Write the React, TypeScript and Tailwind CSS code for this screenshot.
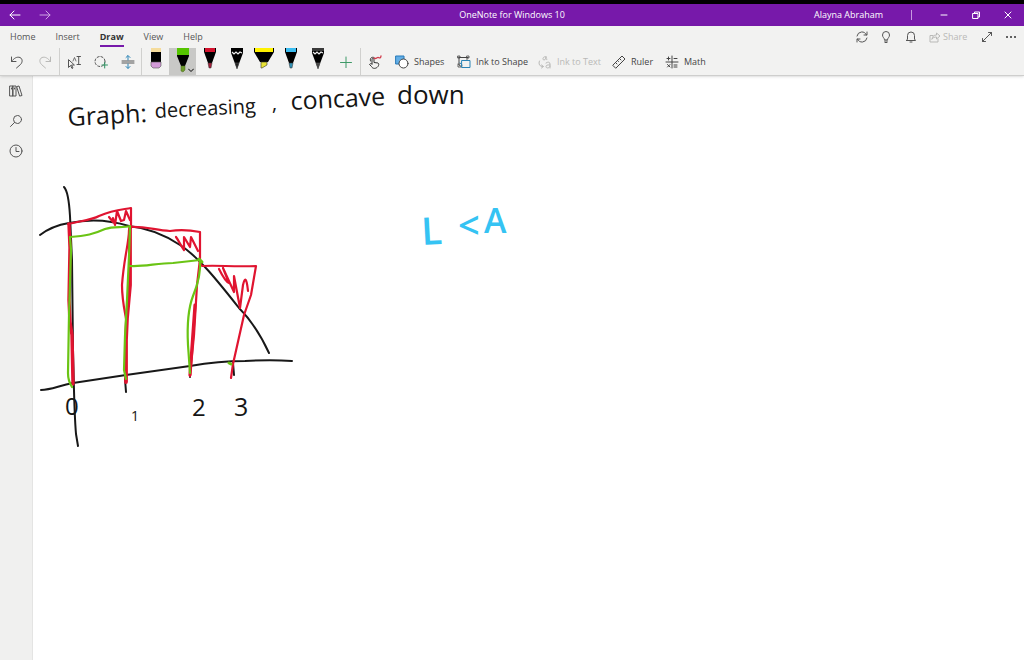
import React, { useState } from 'react'

interface IconProps {
  children: React.ReactNode
  className?: string
  size?: number
}

const Icon = ({ children, className = '', size = 14 }: IconProps) => (
  <svg
    className={`shrink-0 ${className}`}
    width={size}
    height={size}
    viewBox={`0 0 ${size} ${size}`}
    fill="none"
    stroke="currentColor"
    strokeWidth="1"
    strokeLinecap="round"
    strokeLinejoin="round"
    aria-hidden="true"
  >
    {children}
  </svg>
)

const tabs = ['Home', 'Insert', 'Draw', 'View', 'Help']

const pens = [
  { name: 'Green marker', kind: 'marker', color: '#55c400', tip: '#6d9a2c' },
  { name: 'Red pen', kind: 'pen', color: '#d3122e', tip: '#a3203a' },
  { name: 'Black pen', kind: 'pencil', color: '#000000', tip: '#222222' },
  { name: 'Yellow highlighter', kind: 'highlighter', color: '#fff200', tip: '#e8e337' },
  { name: 'Blue pen', kind: 'pen', color: '#3cbdf0', tip: '#3291b4' },
  { name: 'Gray pencil', kind: 'pencil', color: '#3a3a3a', tip: '#444444' }
]

const PenIcon = ({ kind, color, tip }: { kind: string; color: string; tip: string }) => (
  <svg width="20" height="25" viewBox="0 0 20 25" aria-hidden="true">
    {kind === 'highlighter' && (
      <>
        <path d="M0 0H20V4L14 14H6L0 4Z" fill="#000" />
        <path d="M1 0H19V4H1Z" fill={color} />
        <path d="M7 14H13V17L8 20H7Z" fill={tip} stroke="#333" strokeWidth=".6" />
      </>
    )}
    {kind === 'marker' && (
      <>
        <path d="M4 0H16V8L12 18H8L4 8Z" fill="#000" />
        <path d="M4 0H16V7H4Z" fill={color} />
        <path d="M8 18H12V22L10 24L8 23Z" fill={tip} stroke="#4a681e" strokeWidth=".5" />
      </>
    )}
    {kind === 'pen' && (
      <>
        <path d="M4 0H16V4L12 15H8L4 4Z" fill="#000" />
        <path d="M5 0H15V4H5Z" fill={color} />
        <path d="M8 15H12L11 20H9Z" fill={tip} stroke="#333" strokeWidth=".5" />
      </>
    )}
    {kind === 'pencil' && (
      <>
        <path d="M4 0H16V5L10 21L4 5Z" fill="#000" />
        <path d="M4 0H16V3H4Z" fill={color} />
        <path d="M5 4L7 6L9 4L11 6L13 4L15 5" fill="none" stroke="#eee" strokeWidth="1.2" />
        <path d="M8 15H12L10 21Z" fill={tip} stroke="#666" strokeWidth=".5" />
      </>
    )}
  </svg>
)

const Divider = () => <span className="w-px self-stretch bg-[#d0d0ce]" />

const ToolButton = ({
  label,
  className = 'w-[27px]',
  children
}: {
  label: string
  className?: string
  children: React.ReactNode
}) => (
  <button type="button" aria-label={label} className={`flex shrink-0 items-center justify-center ${className}`}>
    {children}
  </button>
)

const LabelButton = ({
  label,
  className,
  disabled = false,
  children
}: {
  label: string
  className: string
  disabled?: boolean
  children: React.ReactNode
}) => (
  <button
    type="button"
    disabled={disabled}
    className={`flex shrink-0 items-center gap-[5px] whitespace-nowrap ${className} ${disabled ? 'text-[#b9b9b7]' : 'text-[#444444]'}`}
  >
    {children}
    <span>{label}</span>
  </button>
)

function TitleBar() {
  return (
    <header className="grid h-[26px] grid-cols-[1fr_auto_1fr] items-center border-t-4 border-black bg-[#7719aa] text-white">
      <div className="flex items-center gap-[18px] pl-[9px]">
        <button type="button" aria-label="Back">
          <Icon size={12}><path d="M1 6H11M5 2L1 6L5 10" /></Icon>
        </button>
        <button type="button" aria-label="Forward" className="text-[#cfa5e4]">
          <Icon size={12}><path d="M1 6H11M7 2L11 6L7 10" /></Icon>
        </button>
      </div>
      <h1>OneNote for Windows 10</h1>
      <div className="flex items-center justify-end pr-[10px]">
        <span>Alayna Abraham</span>
        <span className="mr-[26px] ml-7 h-[10px] w-px bg-[#c79ae0]" />
        <div className="flex gap-5">
          <button type="button" aria-label="Minimize">
            <Icon size={12}><path d="M3 6H9" /></Icon>
          </button>
          <button type="button" aria-label="Restore">
            <Icon size={12}><path d="M3 4.500H8V9.500H3ZM4.500 4.500V3H9.500V8H8" /></Icon>
          </button>
          <button type="button" aria-label="Close">
            <Icon size={12}><path d="M3 3L9 9M9 3L3 9" /></Icon>
          </button>
        </div>
      </div>
    </header>
  )
}

function MenuBar() {
  const [active, setActive] = useState('Draw')

  return (
    <div className="flex h-[22px] items-stretch justify-between pr-px pl-[10px]">
      <nav className="flex gap-5">
        {tabs.map(tab => (
          <button
            key={tab}
            type="button"
            onClick={() => setActive(tab)}
            className={`h-[21px] border-b-2 pt-[3px] ${
              active === tab ? 'border-[#7719aa] font-bold text-[#333333]' : 'border-transparent'
            }`}
          >
            {tab}
          </button>
        ))}
      </nav>
      <div className="flex items-center">
        <ToolButton label="Sync" className="w-6">
          <Icon size={12}>
            <path d="M1 5A5 5 0 0 1 10.500 4M11 7A5 5 0 0 1 1.500 8M11 1V4H8M1 11V8H4" />
          </Icon>
        </ToolButton>
        <ToolButton label="Tell me" className="w-6">
          <Icon size={12}>
            <path d="M4.500 8.500C4.500 7 2.500 6.500 2.500 4A3.500 3.500 0 0 1 9.500 4C9.500 6.500 7.500 7 7.500 8.500ZM4.500 10H7.500M5 11.500H7" />
          </Icon>
        </ToolButton>
        <ToolButton label="Notifications" className="w-[25px]">
          <Icon size={12}>
            <path d="M1.500 9.500H10.500L9.500 8V4.500A3.500 3.500 0 0 0 2.500 4.500V8ZM5 11H7" />
          </Icon>
        </ToolButton>
        <button type="button" disabled className="flex w-[52px] items-center gap-[2px] pl-[6px] text-[#b9b9b7]">
          <Icon size={12}>
            <path d="M4 4.500H1V11H9V8M3 8C3.500 5 5 4 7.500 4V2L11 5L7.500 8V6C5.500 6 4 6.500 3 8Z" />
          </Icon>
          <span>Share</span>
        </button>
        <ToolButton label="Full screen" className="w-6">
          <Icon size={12}><path d="M1.500 10.500L10.500 1.500M7.500 1.500H10.500V4.500M4.500 10.500H1.500V7.500" /></Icon>
        </ToolButton>
        <ToolButton label="More" className="w-6 text-[#333333]">
          <Icon size={12}>
            <path d="M2 6H2.010M6 6H6.010M10 6H10.010" strokeWidth="2" />
          </Icon>
        </ToolButton>
      </div>
    </div>
  )
}

function Toolbar() {
  const [pen, setPen] = useState('Green marker')

  return (
    <div className="flex h-[27px] items-stretch pl-[3px]">
      <ToolButton label="Undo" className="w-7">
        <Icon><path d="M1.500 2V6.500H6M1.500 6.500C4 3 7 1.500 10 2.500C13 4 12.500 7.500 10.500 9.500L6.500 13" /></Icon>
      </ToolButton>
      <ToolButton label="Redo" className="w-7 text-[#b9b9b7]">
        <Icon><path d="M12.500 2V6.500H8M12.500 6.500C10 3 7 1.500 4 2.500C1 4 1.500 7.500 3.500 9.500L7.500 13" /></Icon>
      </ToolButton>
      <Divider />
      <ToolButton label="Select objects or type text">
        <Icon>
          <path d="M1.500 5V12.500L3.500 10.500L5 13.500L6 13L4.500 10H7Z" />
          <path d="M6 6L7.500 2.500L9 6" strokeWidth=".8" />
          <path d="M10 1.500H13.500M11.700 1.500V9.500M10 9.500H13.500" />
        </Icon>
      </ToolButton>
      <ToolButton label="Lasso select">
        <Icon>
          <circle cx="6" cy="6.500" r="5" strokeDasharray="2 2" />
          <path d="M8 10H13.500M10.700 7.500V13" stroke="#2f9262" />
        </Icon>
      </ToolButton>
      <ToolButton label="Insert or remove extra writing space">
        <Icon>
          <path d="M1 6H13M1 8H13" />
          <path d="M7 5V1M5 2.500L7 .5L9 2.500M7 9V13M5 11.500L7 13.500L9 11.500" stroke="#2b83b5" />
        </Icon>
      </ToolButton>
      <Divider />
      <ToolButton label="Eraser" className="w-[27px] items-start!">
        <svg width="20" height="25" viewBox="0 0 20 25" aria-hidden="true">
          <path d="M5 0H15V14H5Z" fill="#000" />
          <path d="M5 0H15V4H5Z" fill="#f5dc9c" />
          <path d="M5 14H15V18L13 20H7L5 18Z" fill="#d39bd8" stroke="#555" strokeWidth=".6" />
        </svg>
      </ToolButton>
      {pens.map(p => (
        <button
          key={p.name}
          type="button"
          aria-label={p.name}
          aria-pressed={pen === p.name}
          onClick={() => setPen(p.name)}
          className={`relative flex w-[27px] shrink-0 items-start justify-center ${pen === p.name ? 'bg-[#c8c8c6]' : ''}`}
        >
          <PenIcon kind={p.kind} color={p.color} tip={p.tip} />
          {pen === p.name && (
            <Icon size={6} className="absolute right-[2px] bottom-[2px] text-black">
              <path d="M.5 2L3 4.500L5.500 2" />
            </Icon>
          )}
        </button>
      ))}
      <ToolButton label="Add pen" className="w-[29px] text-[#3f9a68]">
        <Icon size={12}><path d="M.5 6.500H11.500M6 1V12" /></Icon>
      </ToolButton>
      <Divider />
      <ToolButton label="Draw with touch" className="w-[28px] text-[#333333]">
        <Icon>
          <path d="M4 9V4.500A1 1 0 0 1 6 4.500V7.500L10 8C11 8.500 11 10 10 11.500C8 14 4.500 14 3.500 11.500L1.500 9.500C2 8.500 3 8.500 4 9M2.500 6C1.500 3 4 1.500 6 2.500" />
          <path d="M6 3C8 5 9 1.500 10.500 2.500C12 3.500 13 2.500 13 .8" stroke="#d13b4b" strokeWidth="1.300" />
        </Icon>
      </ToolButton>
      <LabelButton label="Shapes" className="w-[68px] pl-[6px]">
        <Icon>
          <path d="M1 1H9V4L4 9H1Z" fill="#62aee6" stroke="#2478b8" />
          <circle cx="8.500" cy="8.500" r="4.500" fill="#fff" />
        </Icon>
      </LabelButton>
      <LabelButton label="Ink to Shape" className="w-[81px]">
        <Icon>
          <path d="M2 9.500V2M2 2.500H11M5 11C3 11.500 1.500 10.500 2 9" />
          <path d="M1 1H3V3H1ZM10 1H12V3H10ZM1 9V12H4M10 3V5" strokeWidth=".8" />
          <path d="M5 5.500H13V12.500H5ZM3 8L5 9.500" stroke="#2b83b5" />
        </Icon>
      </LabelButton>
      <LabelButton label="Ink to Text" className="w-[74px]" disabled>
        <Icon>
          <path d="M8 2C5 .5 4 5 6 5C7.500 5 8 3 8 1.500C8 4 8 5 9 4.500M1.500 6C0 9 2 12 5 11.500M3.500 10L5.500 11.500L3.500 13" />
          <path d="M8 8C10 6.500 12 7 12 9V13M12 10C9 9.500 8 10.500 8 11.500C8 13.500 11 13.500 12 11.500" />
        </Icon>
      </LabelButton>
      <LabelButton label="Ruler" className="w-[53px]">
        <Icon>
          <path d="M1 10L10 1L13 4L4 13ZM3.500 7.500L5 9M5.500 5.500L6.500 6.500M7.500 3.500L9 5" />
        </Icon>
      </LabelButton>
      <LabelButton label="Math" className="w-[50px]">
        <Icon>
          <path d="M7 1V13M1 7H13M2 3.500H5M3.500 2V5M9 3.500H12M2.500 9.500L5 12M5 9.500L2.500 12M9 10H12M9 12H12" />
        </Icon>
      </LabelButton>
    </div>
  )
}

function SideRail() {
  return (
    <aside className="flex w-[33px] shrink-0 flex-col items-center border-r border-[#e4e4e3] bg-[#f0f0ef] text-[#555555]">
      <ToolButton label="Show notebooks" className="h-[30px] w-8">
        <Icon>
          <path d="M1 2H4V12H1ZM4 2H7V12H4ZM8 2.500L10 2L13 11.500L11 12ZM2.500 4V5M5.500 4V5" />
        </Icon>
      </ToolButton>
      <ToolButton label="Search" className="h-[30px] w-8">
        <Icon><circle cx="8.500" cy="5.500" r="4" /><path d="M5.500 8.500L1.500 12.500" /></Icon>
      </ToolButton>
      <ToolButton label="Recent notes" className="h-[30px] w-8">
        <Icon><circle cx="7" cy="7" r="6" /><path d="M7 3.500V7.500H10" /></Icon>
      </ToolButton>
    </aside>
  )
}

// Ink strokes share one coordinate space so the layers line up
function InkCanvas() {
  return (
    <svg className="h-[584px] w-[991px]" viewBox="33 76 991 584" fill="none" strokeLinecap="round" strokeLinejoin="round">
      <g fill="#151515" className="font-['Open_Sans',sans-serif]">
        <text x="68" y="126" fontSize="25" transform="rotate(-3 68 126)">Graph:</text>
        <text x="155" y="118" fontSize="20" transform="rotate(-3 155 118)">decreasing</text>
        <text x="272" y="110" fontSize="20">,</text>
        <text x="291" y="110" fontSize="25" transform="rotate(-3 291 110)">concave</text>
        <text x="397" y="104" fontSize="26">down</text>
        <text x="65" y="415" fontSize="24">0</text>
        <text x="131" y="421" fontSize="14">1</text>
        <text x="192" y="416" fontSize="24">2</text>
        <text x="234" y="416" fontSize="25">3</text>
      </g>
      <g fill="#35c3f3" className="font-['Open_Sans',sans-serif] font-semibold">
        <text x="422" y="245" fontSize="38" transform="rotate(-3 422 245)">L</text>
        <text x="458" y="239" fontSize="38">&lt;</text>
        <text x="484" y="233" fontSize="34">A</text>
      </g>

      <g stroke="#181818" strokeWidth="2">
        <path d="M64 187C67 190 69 199 70 216L72 260L73 350C74 384 74 411 76 434L78 446" />
        <path d="M40 235C49 228 57 225 69 223C88 219 107 219 129 226C148 228 165 235 180 245C199 257 220 284 239 308C252 321 262 338 269 353" />
        <path d="M41 390C51 390 58 386 73 383L126 375L190 366C213 362 228 361 245 361C263 360 278 360 292 361" />
        <path d="M125 379L126 392M190 366V377M233 363L234 375" />
      </g>

      <g stroke="#e01430" strokeWidth="2.200">
        <path d="M68 224C80 221 92 220 99 216C113 210 119 210 131 208V228" />
        <path d="M69 224L70 248L69 300L70 322L72 335L73 384" strokeWidth="3.400" />
        <path d="M109 217L113 222V218L115 225L117 211L121 221L124 220L126 211L130 220" />
        <path d="M130 227C144 226 155 230 170 231C182 229 190 230 200 232V259L197 285L194 335L190 376" />
        <path d="M129 230C129 243 124 257 122 285C122 303 126 316 127 325" />
        <path d="M130 228L130 285L127 318L126 340L126 382" strokeWidth="3.800" />
        <path d="M176 237C179 241 181 246 184 250V237L190 247L191 237L198 251" />
        <path d="M200 263L202 266C219 265 232 267 256 266L251 295L244 315L233 364L231 378" />
        <path d="M219 269C223 277 226 282 229 283L223 268L234 292V276L240 308L243 285Q246 272 248 291" />
        <path d="M195 305L190 375" strokeWidth="3.200" />
      </g>

      <g stroke="#6ac414" strokeWidth="2.200">
        <path d="M70 237L71 250L69 315L68 373C68 379 70 384 72 387" />
        <path d="M70 237C86 236 94 234 105 229C114 226 122 228 130 226L129 256L127 300L125 336L124 370L126 379" />
        <path d="M130 266C144 267 157 263 173 263L200 260C201 273 198 284 193 296C188 309 187 326 188 345L190 373" />
        <path d="M199 259L202 262M229 363L231 364" strokeWidth="3" />
      </g>
    </svg>
  )
}

export default function App() {
  return (
    <div className="flex min-h-screen flex-col overflow-hidden bg-white font-['Open_Sans',sans-serif] text-[9px] leading-3 text-[#555555]">
      <TitleBar />
      <div className="relative h-[50px] border-b border-[#cececd] bg-[#f2f2f1] shadow-sm">
        <MenuBar />
        <Toolbar />
      </div>
      <div className="flex flex-1">
        <SideRail />
        <main className="min-w-0 flex-1 overflow-hidden bg-white">
          <InkCanvas />
        </main>
      </div>
    </div>
  )
}
